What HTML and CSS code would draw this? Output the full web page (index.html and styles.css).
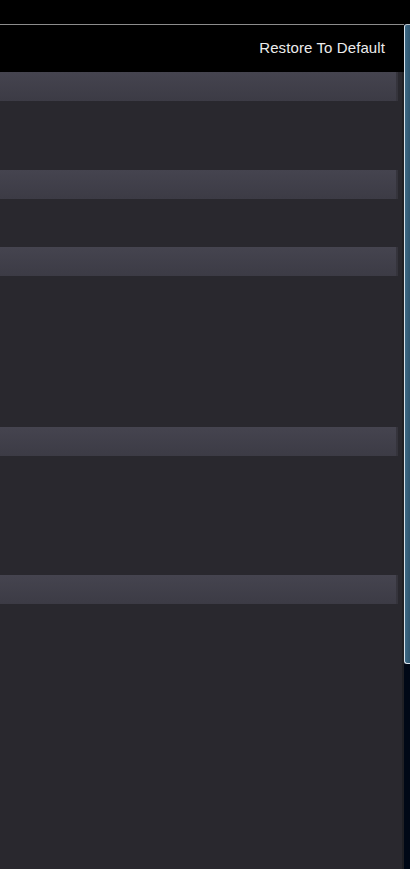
FILE: index.html
```html
<!DOCTYPE html>
<html>
<head>
<meta charset="utf-8">
<link rel="stylesheet" href="styles.css">
</head>
<body>
<div class="top"></div>
<div class="frame">
  <div class="main">
    <div class="header"><span class="restore">Restore To Default</span></div>
    <div class="content">
      <div class="bar"></div><div class="gap g1"></div>
      <div class="bar"></div><div class="gap g2"></div>
      <div class="bar"></div><div class="gap g3"></div>
      <div class="bar"></div><div class="gap g4"></div>
      <div class="bar"></div><div class="gap rest"></div>
    </div>
  </div>
  <div class="side">
    <div class="rail"></div>
  </div>
</div>
</body>
</html>
```
FILE: styles.css
```css
html, body {
  margin: 0;
  padding: 0;
  background: #000;
  height: 869px;
  overflow: hidden;
  font-family: "Liberation Sans", Arial, sans-serif;
}
.top {
  height: 24px;
  background: #000;
}
.frame {
  display: flex;
  height: 845px;
}
.main {
  width: 404px;
  display: flex;
  flex-direction: column;
}
.header {
  height: 48px;
  border-top: 1px solid #8c8c8c;
  background: #000;
  display: flex;
  justify-content: flex-end;
  align-items: flex-start;
  padding-right: 19px;
  box-sizing: border-box;
}
.restore {
  color: #ececec;
  font-size: 15px;
  letter-spacing: 0.1px;
  margin-top: 14px;
}
.content {
  flex: 1;
  background: #29282e;
  padding-right: 4px;
  border-right: 2px solid #202024;
  display: flex;
  flex-direction: column;
}
.bar {
  height: 29px;
  background: linear-gradient(#45444f, #3c3b45);
  border-right: 2px solid #35343c;
}
.g1 { height: 69px; }
.g2 { height: 48px; }
.g3 { height: 151px; }
.g4 { height: 119px; }
.rest { flex: 1; }
.side {
  width: 6px;
  background: #000816;
}
.rail {
  height: 640px;
  box-sizing: border-box;
  border-left: 1px solid #d8e2ea;
  border-top: 1px solid #b8c4cc;
  border-bottom: 1px solid #d8e2ea;
  border-radius: 3px 0 0 3px;
  background: linear-gradient(90deg, #3e6a86, #2f5670);
}
```
